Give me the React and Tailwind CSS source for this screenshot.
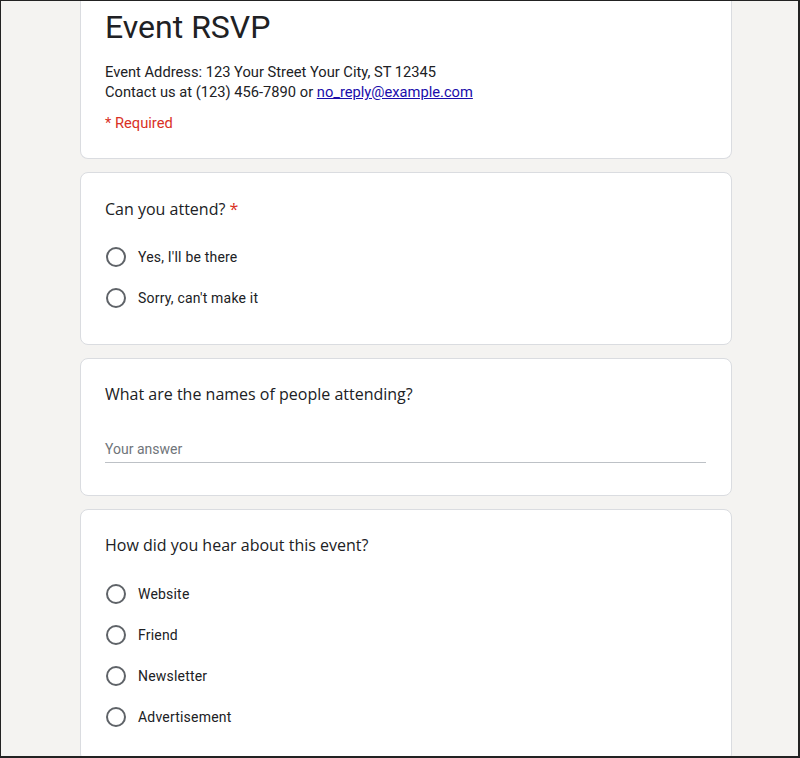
import React from 'react';

const sans = { fontFamily: 'Roboto, "Liberation Sans", sans-serif' };
const heading = { fontFamily: '"Open Sans", Roboto, sans-serif' };

const Radio = ({ label }) => (
	<div className="h-[41px] flex items-center">
		<span className="w-[20px] h-[20px] rounded-full border-2 border-[#5f6368] ml-[1px] box-border"></span>
		<span className="ml-[12px] text-[14px] leading-[20px] text-[#202124] tracking-[0.2px]">{label}</span>
	</div>
);

const Card = ({ className = '', children }) => (
	<div className={`w-[652px] bg-white border border-[#dadce0] rounded-[8px] px-[24px] ${className}`}>
		{children}
	</div>
);

const Question = ({ children }) => (
	<div className="text-[16px] leading-[24px] text-[#202124]" style={heading}>
		{children}
	</div>
);

const App = () => {
	return (
		<div
			className="w-[800px] h-[758px] overflow-hidden bg-[#f4f3f1] border-t border-l border-r-2 border-b-2 border-[#222] box-border pl-[79px]"
			style={sans}
		>
			{/* header card, cut off at the top */}
			<Card className="border-t-0 rounded-t-none pt-[6px] pb-[25px]">
				<h1 className="text-[32px] leading-[40px] text-[#202124]">Event RSVP</h1>
				<div className="mt-[15px] text-[14.7px] leading-[20px] text-[#202124]">
					<p>Event Address: 123 Your Street Your City, ST 12345</p>
					<p>
						Contact us at (123) 456-7890 or{' '}
						<a href="#" className="text-[#1a0dab] underline">no_reply@example.com</a>
					</p>
				</div>
				<p className="mt-[11px] text-[14.7px] leading-[20px] text-[#d93025]">* Required</p>
			</Card>

			<Card className="mt-[13px] pt-[24px] pb-[26px]">
				<Question>
					Can you attend? <span className="text-[#d93025]">*</span>
				</Question>
				<div className="mt-[15px]">
					<Radio label="Yes, I'll be there" />
					<Radio label="Sorry, can't make it" />
				</div>
			</Card>

			<Card className="mt-[13px] pt-[23px] pb-[32px]">
				<Question>What are the names of people attending?</Question>
				<div className="mt-[33px] w-[601px] border-b border-[#bdc1c6] pb-[3px]">
					<span className="text-[14px] leading-[20px] text-[#70757a] block">Your answer</span>
				</div>
			</Card>

			<Card className="mt-[13px] pt-[23px] pb-[24px]">
				<Question>How did you hear about this event?</Question>
				<div className="mt-[16px]">
					<Radio label="Website" />
					<Radio label="Friend" />
					<Radio label="Newsletter" />
					<Radio label="Advertisement" />
				</div>
			</Card>
		</div>
	);
};

export default App;
